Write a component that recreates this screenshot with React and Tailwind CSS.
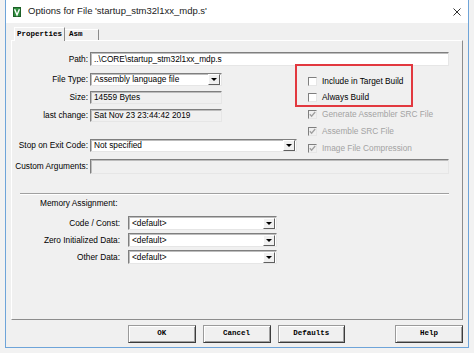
import React from 'react';

// Windows classic style "Options for File" dialog
const ui = "font-['Liberation_Sans',Arial,sans-serif]";
const mono = "font-['Liberation_Mono','Courier_New',monospace] font-bold";

function Sunken({ gray, children, className = '' }) {
  return (
    <div
      className={`h-full flex items-center pl-[3px] overflow-hidden whitespace-nowrap text-[8.3px] text-black border border-t-[#7f7f7f] border-l-[#7f7f7f] border-r-[#e6e6e6] border-b-[#e6e6e6] shadow-[inset_1px_1px_0_#bdbdbd] ${gray ? 'bg-[#f0f0f0]' : 'bg-white'} ${className}`}
    >
      {children}
    </div>
  );
}

function Arrow() {
  return (
    <div className="ml-auto mr-[1px] h-[11px] w-[12px] shrink-0 bg-[#f0f0f0] border border-t-white border-l-white border-r-[#5f5f5f] border-b-[#5f5f5f] flex items-center justify-center">
      <div className="w-0 h-0 border-l-[3px] border-r-[3px] border-t-[3px] border-l-transparent border-r-transparent border-t-black" />
    </div>
  );
}

function Row({ label, labelW, gap, fieldW, h, className = '', children }) {
  return (
    <div className={`flex items-center ${className}`} style={{ height: h }}>
      <div className="text-right text-[8.3px] text-black whitespace-nowrap" style={{ width: labelW, marginRight: gap }}>
        {label}
      </div>
      <div className="h-full" style={{ width: fieldW }}>
        {children}
      </div>
    </div>
  );
}

function Check({ label, checked, disabled, h }) {
  return (
    <div className="flex items-center" style={{ height: h }}>
      <div
        className={`w-[9px] h-[9px] shrink-0 border border-t-[#7f7f7f] border-l-[#7f7f7f] border-r-[#e6e6e6] border-b-[#e6e6e6] flex items-center justify-center ${disabled ? 'bg-[#f0f0f0]' : 'bg-white'}`}
      >
        {checked && (
          <svg width="7" height="7" viewBox="0 0 7 7">
            <path d="M0.8 3.2 L2.6 5.2 L6.2 1" fill="none" stroke="#a0a0a0" strokeWidth="1.3" />
          </svg>
        )}
      </div>
      <span className={`ml-[5px] text-[8.3px] whitespace-nowrap ${disabled ? 'text-[#a3a3a3]' : 'text-black'}`}>{label}</span>
    </div>
  );
}

function Button({ children, className = '' }) {
  return (
    <div
      className={`w-[68px] h-[18px] flex items-center justify-center bg-[#f0f0f0] border border-t-[#9a9a9a] border-l-[#9a9a9a] border-r-[#3c3c3c] border-b-[#3c3c3c] shadow-[inset_1px_1px_0_#ffffff,inset_-1px_-1px_0_#a0a0a0] text-[7.5px] text-black ${mono} ${className}`}
    >
      {children}
    </div>
  );
}

export default function App() {
  return (
    <div className={`w-[474px] h-[353px] overflow-hidden bg-[#f2f2f2] ${ui}`}>
      <div className="ml-[5px] w-[464px] h-[348px] flex flex-col bg-[#f0f0f0] border-x border-b border-[#6ea4d9]">
        {/* title bar */}
        <div className="h-[23px] shrink-0 bg-white flex items-center">
          <svg className="ml-[7px]" width="8" height="10" viewBox="0 0 8 10">
            <rect x="0" y="0" width="8" height="10" fill="#2f8f3e" />
            <rect x="0.5" y="0.5" width="7" height="9" fill="none" stroke="#1c5f27" strokeWidth="1" />
            <path d="M1.6 2.2 L4 8 L6.4 2.2" fill="none" stroke="#ffffff" strokeWidth="1.4" />
          </svg>
          <span className="ml-[7px] text-[9.5px] text-[#1a1a1a] whitespace-nowrap">Options for File 'startup_stm32l1xx_mdp.s'</span>
          <svg className="ml-auto mr-[7px]" width="8" height="8" viewBox="0 0 8 8">
            <path d="M0.5 0.5 L7.5 7.5 M7.5 0.5 L0.5 7.5" stroke="#333333" strokeWidth="1" />
          </svg>
        </div>

        {/* body */}
        <div className="flex flex-col px-[5px]">
          {/* tabs */}
          <div className="mt-[4px] ml-[3px] h-[14px] -mb-px relative z-10 flex items-end">
            <div className={`h-[14px] w-[51px] flex items-center justify-center bg-[#f0f0f0] border-t border-l border-r border-t-white border-l-white border-r-[#8a8a8a] text-[7.5px] text-black ${mono}`}>
              Properties
            </div>
            <div className={`h-[11px] w-[34px] mb-px flex items-center pl-[4px] border-t border-r border-t-white border-r-[#8a8a8a] text-[7.5px] text-black ${mono}`}>
              Asm
            </div>
          </div>

          {/* panel */}
          <div className="relative h-[280px] flex flex-col border border-t-white border-l-white border-r-[#8c8c8c] border-b-[#8c8c8c]">
            {/* red annotation */}
            <div className="absolute left-[283px] top-[23px] w-[118px] h-[43px] border-2 border-[#e2383f]" />

            <Row label="Path:" labelW={76} gap={2} fieldW={359} h={14} className="mt-[11px]">
              <Sunken>..\CORE\startup_stm32l1xx_mdp.s</Sunken>
            </Row>

            <div className="mt-[7px] h-[86px] flex">
              <div className="w-[285px] flex flex-col">
                <Row label="File Type:" labelW={76} gap={2} fieldW={132} h={13}>
                  <Sunken>
                    Assembly language file
                    <Arrow />
                  </Sunken>
                </Row>
                <Row label="Size:" labelW={76} gap={2} fieldW={132} h={13} className="mt-[5px]">
                  <Sunken gray>14559 Bytes</Sunken>
                </Row>
                <Row label="last change:" labelW={76} gap={2} fieldW={132} h={13} className="mt-[5px]">
                  <Sunken gray>Sat Nov 23 23:44:42 2019</Sunken>
                </Row>
                <Row label="Stop on Exit Code:" labelW={76} gap={2} fieldW={207} h={13} className="mt-[17px]">
                  <Sunken>
                    Not specified
                    <Arrow />
                  </Sunken>
                </Row>
              </div>
              <div className="pl-[11px] flex flex-col">
                <Check h={16} label="Include in Target Build" />
                <Check h={16} label="Always Build" />
                <Check h={18} label="Generate Assembler SRC File" checked disabled />
                <Check h={17} label="Assemble SRC File" checked disabled />
                <Check h={17} label="Image File Compression" checked disabled />
              </div>
            </div>

            <Row label="Custom Arguments:" labelW={76} gap={2} fieldW={359} h={15}>
              <Sunken gray />
            </Row>

            {/* separator */}
            <div className="mt-[19px] ml-[8px] w-[429px] h-[2px] border-t border-b border-t-[#a0a0a0] border-b-white" />

            <div className="mt-[2px] ml-[28px] h-[12px] flex items-center text-[8.3px] text-black">Memory Assignment:</div>

            <Row label="Code / Const:" labelW={108} gap={8} fieldW={149} h={14} className="mt-[7px]">
              <Sunken>
                &lt;default&gt;
                <Arrow />
              </Sunken>
            </Row>
            <Row label="Zero Initialized Data:" labelW={108} gap={8} fieldW={149} h={14} className="mt-[3px]">
              <Sunken>
                &lt;default&gt;
                <Arrow />
              </Sunken>
            </Row>
            <Row label="Other Data:" labelW={108} gap={8} fieldW={149} h={14} className="mt-[3px]">
              <Sunken>
                &lt;default&gt;
                <Arrow />
              </Sunken>
            </Row>
          </div>

          {/* buttons */}
          <div className="mt-[5px] flex">
            <Button className="ml-[117px]">OK</Button>
            <Button className="ml-[7px]">Cancel</Button>
            <Button className="ml-[7px]">Defaults</Button>
            <Button className="ml-[50px]">Help</Button>
          </div>
        </div>
      </div>
    </div>
  );
}
